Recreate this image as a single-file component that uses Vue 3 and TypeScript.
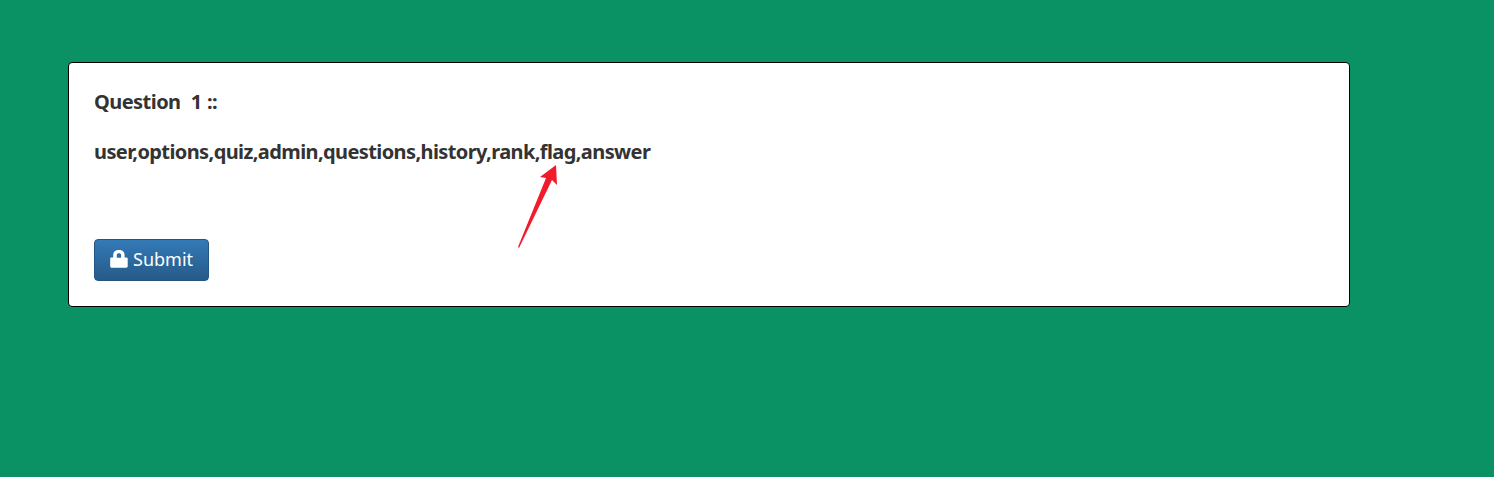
<script setup lang="ts">
const question = 'Question  1 ::'
const answer = 'user,options,quiz,admin,questions,history,rank,flag,answer'
</script>

<template>
  <main class="page">
    <section class="card">
      <h3 class="question">{{ question }}</h3>
      <p class="answer">{{ answer }}</p>
      <button class="submit" type="button">
        <svg class="lock" viewBox="0 0 18 18" width="18" height="18" aria-hidden="true">
          <path fill="#fff" fill-rule="evenodd" d="M3.200 7.500V5C3.200 1.900 5.400 0 8.900 0s5.700 1.900 5.700 5v2.500h1.700c.9 0 1.400.5 1.400 1.400v7.400c0 .9-.5 1.400-1.400 1.400H1.600C.7 17.700.2 17.200.2 16.300V8.900C.2 8 .7 7.500 1.600 7.500h1.600zM6.800 7.800h4.300V5.200C11.100 3.900 10.300 3.300 8.900 3.300S6.800 3.900 6.800 5.200v2.600z" />
        </svg>
        <span>Submit</span>
      </button>
      <svg class="arrow" viewBox="0 0 50 90" width="50" height="90" aria-hidden="true">
        <polygon fill="#f21b2b" points="46,1 47,21 42,16 9,84 8,83 36,14 30,13" />
      </svg>
    </section>
  </main>
</template>

<style scoped>
.page {
  height: 477px;
  background: #0a9264;
  padding: 62px 0 0 68px;
  box-sizing: border-box;
  font-family: "Noto Sans", "Open Sans", sans-serif;
  color: #333;
}
.card {
  position: relative;
  width: 1282px;
  height: 245px;
  box-sizing: border-box;
  background: #fff;
  border: 1px solid #000;
  border-radius: 4px;
  padding: 25px;
}
.question {
  margin: 0;
  font-size: 20px;
  line-height: 28px;
  font-weight: 700;
  letter-spacing: -0.55px;
  word-spacing: 0.5px;
  white-space: pre;
}
.answer {
  margin: 22px 0 0;
  font-size: 20px;
  line-height: 28px;
  font-weight: 700;
  letter-spacing: -0.6px;
}
.submit {
  display: flex;
  align-items: center;
  gap: 5px;
  margin-top: 73px;
  width: 115px;
  height: 42px;
  padding: 0 15px 2px;
  box-sizing: border-box;
  border: 1px solid #245580;
  border-radius: 4px;
  background: linear-gradient(to bottom, #337ab7, #265a88);
  color: #fff;
  font-family: inherit;
  font-size: 18px;
}
.lock {
  flex: none;
}
.arrow {
  position: absolute;
  left: 441px;
  top: 101px;
}
</style>
